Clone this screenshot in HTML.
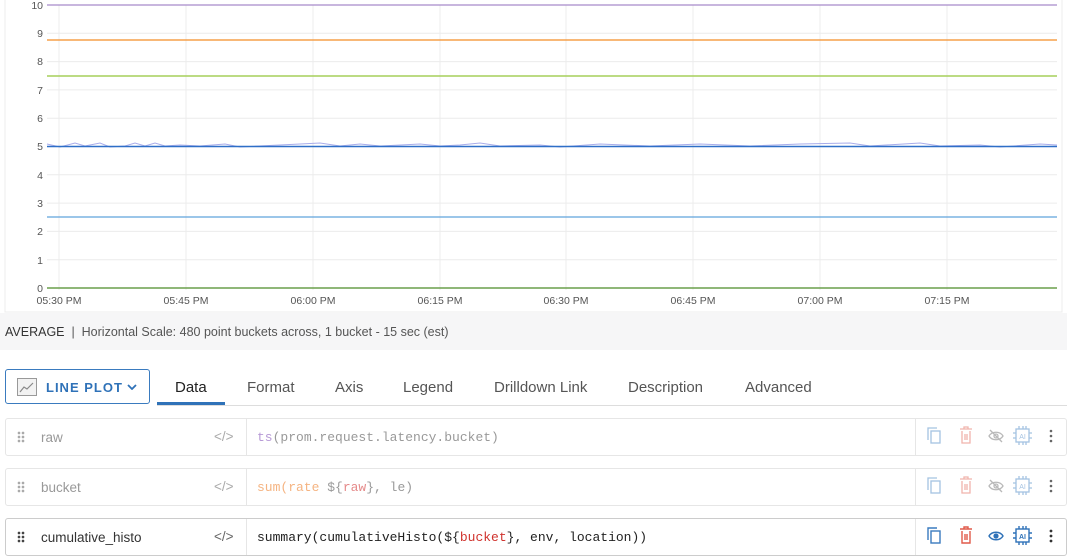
<!DOCTYPE html>
<html><head><meta charset="utf-8"><style>
*{box-sizing:border-box;margin:0;padding:0}
body{width:1067px;height:559px;overflow:hidden;background:#fff;font-family:"Liberation Sans",sans-serif;position:relative}
.abs{position:absolute}
.status{left:0;top:313px;width:1067px;height:37px;background:#f6f6f7;font-size:12.5px;color:#555;padding:12px 0 0 5px}
.status b{font-weight:normal;color:#333}
.lp{left:5px;top:369px;width:145px;height:35px;border:1px solid #3a7bbf;border-radius:3px;color:#2f72b8;font-size:13px;letter-spacing:1px;font-weight:bold}
.tabs{left:157px;top:368px;height:38px;font-size:15px;color:#555;white-space:nowrap}
.tab{position:absolute;top:11px}
.row{left:5px;width:1062px;height:38px;border:1px solid #e6e6e6;border-radius:3px}
.row.act{border-color:#ccc}
.name{position:absolute;left:35px;top:11px;font-size:13.5px;color:#999}
.code{position:absolute;left:208px;top:10px;font-size:13.5px;color:#aaa}
.q{position:absolute;left:240px;top:0;height:36px;border-left:1px solid #e6e6e6;width:670px;font-family:"Liberation Mono",monospace;font-size:13px;padding:11px 0 0 10px;color:#999}
.ic{position:absolute;left:909px;top:0;height:36px;border-left:1px solid #e6e6e6;width:152px}
.dots{position:absolute;left:11px;top:12px;width:8px;height:12px;background:radial-gradient(circle,#aaa 1.2px,transparent 1.5px) 0 0/4px 4px}
</style></head><body>
<svg class="abs" style="left:0;top:0" width="1067" height="313">
<rect x="5" y="-2" width="1057" height="314" fill="#fff" stroke="#ececec"/>
<g stroke="#ececec" stroke-width="1">
<line x1="47" x2="1057" y1="33.3" y2="33.3"/><line x1="47" x2="1057" y1="61.6" y2="61.6"/><line x1="47" x2="1057" y1="89.9" y2="89.9"/><line x1="47" x2="1057" y1="118.2" y2="118.2"/><line x1="47" x2="1057" y1="174.8" y2="174.8"/><line x1="47" x2="1057" y1="203.1" y2="203.1"/><line x1="47" x2="1057" y1="231.4" y2="231.4"/><line x1="47" x2="1057" y1="259.7" y2="259.7"/>
<line x1="59" x2="59" y1="5" y2="290"/><line x1="186" x2="186" y1="5" y2="290"/><line x1="313" x2="313" y1="5" y2="290"/><line x1="440" x2="440" y1="5" y2="290"/><line x1="566" x2="566" y1="5" y2="290"/><line x1="693" x2="693" y1="5" y2="290"/><line x1="820" x2="820" y1="5" y2="290"/><line x1="947" x2="947" y1="5" y2="290"/>
</g>
<g font-size="10.5" fill="#555" text-anchor="end" font-family="Liberation Sans">
<text x="43" y="9">10</text><text x="43" y="37">9</text><text x="43" y="65">8</text><text x="43" y="94">7</text><text x="43" y="122">6</text><text x="43" y="150">5</text><text x="43" y="179">4</text><text x="43" y="207">3</text><text x="43" y="235">2</text><text x="43" y="264">1</text><text x="43" y="292">0</text>
</g>
<g font-size="10.5" fill="#555" text-anchor="middle" font-family="Liberation Sans">
<text x="59" y="304">05:30 PM</text><text x="186" y="304">05:45 PM</text><text x="313" y="304">06:00 PM</text><text x="440" y="304">06:15 PM</text><text x="566" y="304">06:30 PM</text><text x="693" y="304">06:45 PM</text><text x="820" y="304">07:00 PM</text><text x="947" y="304">07:15 PM</text>
</g>
<line x1="47" x2="1057" y1="5" y2="5" stroke="#a78bc9" stroke-width="1.3"/>
<line x1="47" x2="1057" y1="40" y2="40" stroke="#f5a04a" stroke-width="1.5"/>
<line x1="47" x2="1057" y1="76" y2="76" stroke="#a6cf5a" stroke-width="1.5"/>
<polyline fill="none" stroke="#a8acea" stroke-width="1" points="47,144 60,147 75,143 85,146 100,143 110,147 125,146 135,143 145,146 155,143 165,146 180,145 200,146 225,144 240,147 300,144 320,143 340,146 360,144 380,146 420,144 440,146 460,145 480,143 500,146 540,145 560,147 600,144 650,146 700,144 750,146 800,144 850,143 870,146 920,143 940,146 980,145 1000,147 1040,144 1057,145"/>
<line x1="47" x2="1057" y1="146.5" y2="146.5" stroke="#2e6fc7" stroke-width="1.5"/>
<line x1="47" x2="1057" y1="217" y2="217" stroke="#5fa4dc" stroke-width="1.3"/>
<line x1="47" x2="1057" y1="288" y2="288" stroke="#6a9f4b" stroke-width="1.6"/>
</svg>
<div class="abs status"><b>AVERAGE</b> &nbsp;|&nbsp; Horizontal Scale: 480 point buckets across, 1 bucket - 15 sec (est)</div>
<div class="abs lp">
<svg class="abs" style="left:11px;top:8px" width="20" height="18"><rect x="0.5" y="0.5" width="19" height="17" fill="#f2f2f2" stroke="#999"/><polyline points="3,14 7,9 10,11 16,5" fill="none" stroke="#888" stroke-width="1.2"/></svg>
<span class="abs" style="left:40px;top:10px">LINE PLOT</span>
<svg class="abs" style="left:121px;top:14px" width="10" height="6"><polyline points="1,1 5,5 9,1" fill="none" stroke="#2f72b8" stroke-width="1.8"/></svg>
</div>
<div class="abs" style="left:157px;top:405px;width:910px;height:1px;background:#ddd"></div>
<div class="abs tabs">
<span class="tab" style="left:18px;color:#222">Data</span>
<div class="abs" style="left:0;top:34px;width:68px;height:3px;background:#2f72b8"></div>
<span class="tab" style="left:90px">Format</span>
<span class="tab" style="left:178px">Axis</span>
<span class="tab" style="left:246px">Legend</span>
<span class="tab" style="left:337px">Drilldown Link</span>
<span class="tab" style="left:471px">Description</span>
<span class="tab" style="left:588px">Advanced</span>
</div>

<div class="abs row" style="top:418px"><div class="dots"></div><span class="name">raw</span><span class="code">&lt;/&gt;</span>
<div class="q"><span style="color:#b79ad6">ts</span>(prom.request.latency.bucket)</div>
<div class="ic"></div></div>
<div class="abs row" style="top:468px"><div class="dots"></div><span class="name">bucket</span><span class="code">&lt;/&gt;</span>
<div class="q"><span style="color:#f5b482">sum(rate</span> ${<span style="color:#e58a8a">raw</span>}, le)</div>
<div class="ic"></div></div>
<div class="abs row act" style="top:518px"><div class="dots" style="background:radial-gradient(circle,#444 1.2px,transparent 1.5px) 0 0/4px 4px"></div><span class="name" style="color:#333">cumulative_histo</span><span class="code" style="color:#666">&lt;/&gt;</span>
<div class="q" style="color:#222">summary(cumulativeHisto(${<span style="color:#d0332e">bucket</span>}, env, location))</div>
<div class="ic"></div></div>

<svg class="abs" style="left:925px;top:425px" width="140" height="130">
<g fill="none" stroke-width="1.3">
<g opacity="0.45">
<rect x="6" y="6" width="9" height="12" stroke="#3a7bbf"/><path d="M3 15V3h9" stroke="#3a7bbf"/>
<path d="M35 4h12M39 4V2h4v2M37 6v12h8V6M40 9v6M42 9v6" stroke="#e05a4a"/>
<path d="M64 11c3-5 11-5 14 0c-3 5-11 5-14 0z" stroke="#666"/><circle cx="71" cy="11" r="2" stroke="#666"/><path d="M65 5l12 12" stroke="#666"/>
<rect x="91" y="4" width="13" height="13" stroke="#3a7bbf"/><path d="M94 1v3M98 1v3M101 1v3M94 17v3M98 17v3M101 17v3M88 8h3M88 13h3M104 8h3M104 13h3" stroke="#3a7bbf"/><text x="97.5" y="14" font-size="7" fill="#3a7bbf" stroke="none" text-anchor="middle" font-family="Liberation Sans">AI</text>
</g>
<g fill="#666" stroke="none"><circle cx="126" cy="6" r="1.3"/><circle cx="126" cy="11" r="1.3"/><circle cx="126" cy="16" r="1.3"/></g>
</g>
<g transform="translate(0,50)" fill="none" stroke-width="1.3">
<g opacity="0.45">
<rect x="6" y="6" width="9" height="12" stroke="#3a7bbf"/><path d="M3 15V3h9" stroke="#3a7bbf"/>
<path d="M35 4h12M39 4V2h4v2M37 6v12h8V6M40 9v6M42 9v6" stroke="#e05a4a"/>
<path d="M64 11c3-5 11-5 14 0c-3 5-11 5-14 0z" stroke="#666"/><circle cx="71" cy="11" r="2" stroke="#666"/><path d="M65 5l12 12" stroke="#666"/>
<rect x="91" y="4" width="13" height="13" stroke="#3a7bbf"/><path d="M94 1v3M98 1v3M101 1v3M94 17v3M98 17v3M101 17v3M88 8h3M88 13h3M104 8h3M104 13h3" stroke="#3a7bbf"/><text x="97.5" y="14" font-size="7" fill="#3a7bbf" stroke="none" text-anchor="middle" font-family="Liberation Sans">AI</text>
</g>
<g fill="#666" stroke="none"><circle cx="126" cy="6" r="1.3"/><circle cx="126" cy="11" r="1.3"/><circle cx="126" cy="16" r="1.3"/></g>
</g>
<g transform="translate(0,100)" fill="none" stroke-width="1.4">
<rect x="6" y="6" width="9" height="12" stroke="#3a7bbf"/><path d="M3 15V3h9" stroke="#3a7bbf"/>
<path d="M35 4h12M39 4V2h4v2M37 6v12h8V6M40 9v6M42 9v6" stroke="#e05a4a"/>
<path d="M64 11c3-5 11-5 14 0c-3 5-11 5-14 0z" stroke="#2f72b8" fill="#fff"/><circle cx="71" cy="11" r="2.6" fill="#2f72b8" stroke="none"/>
<rect x="91" y="4" width="13" height="13" stroke="#2f72b8"/><path d="M94 1v3M98 1v3M101 1v3M94 17v3M98 17v3M101 17v3M88 8h3M88 13h3M104 8h3M104 13h3" stroke="#2f72b8"/><text x="97.5" y="14" font-size="7" fill="#2f72b8" stroke="none" text-anchor="middle" font-family="Liberation Sans" font-weight="bold">AI</text>
<g fill="#333" stroke="none"><circle cx="126" cy="6" r="1.4"/><circle cx="126" cy="11" r="1.4"/><circle cx="126" cy="16" r="1.4"/></g>
</g>
</svg>
</body></html>
